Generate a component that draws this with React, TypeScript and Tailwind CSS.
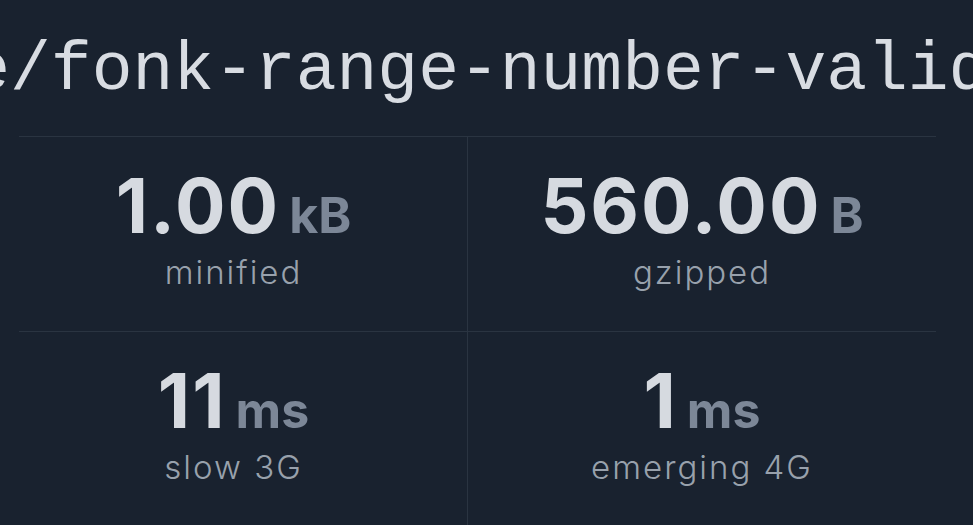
import React from "react";

type Stat = { value: string; unit: string; label: string };

const stats: Stat[] = [
  { value: "1.00", unit: "kB", label: "minified" },
  { value: "560.00", unit: "B", label: "gzipped" },
  { value: "11", unit: "ms", label: "slow 3G" },
  { value: "1", unit: "ms", label: "emerging 4G" },
];

function StatCell({ stat, left }: { stat: Stat; left: boolean }) {
  return (
    <div
      className={
        left
          ? "flex h-[195px] flex-col items-center border-t border-r border-[#2a3441] pt-[31px] pr-[19px]"
          : "flex h-[195px] flex-col items-center border-t border-[#2a3441] pt-[31px]"
      }
    >
      <div className="flex items-baseline gap-[9px] font-['Inter',sans-serif] font-bold leading-none">
        <span className="text-[75px] tracking-[2px] text-[#d6dae0]">{stat.value}</span>
        <span className="text-[50px] text-[#7c8797]">{stat.unit}</span>
      </div>
      <div className="mt-[13px] font-['Inter',sans-serif] text-[33px] font-light leading-none tracking-[2px] text-[#98a1ac]">
        {stat.label}
      </div>
    </div>
  );
}

export default function App() {
  return (
    <div className="h-screen w-full overflow-hidden bg-[#19222f]">
      <div className="h-[136px] overflow-hidden whitespace-nowrap pt-[37px] font-['Liberation_Mono',monospace] text-[68px] leading-none text-[#d8dce2]">
        <div className="-ml-[398px]">@lemoncode/fonk-range-number-validator</div>
      </div>
      <div className="ml-[19px] grid w-[917px] grid-cols-[449px_468px]">
        {stats.map((s, i) => (
          <StatCell key={s.label} stat={s} left={i % 2 === 0} />
        ))}
      </div>
    </div>
  );
}
